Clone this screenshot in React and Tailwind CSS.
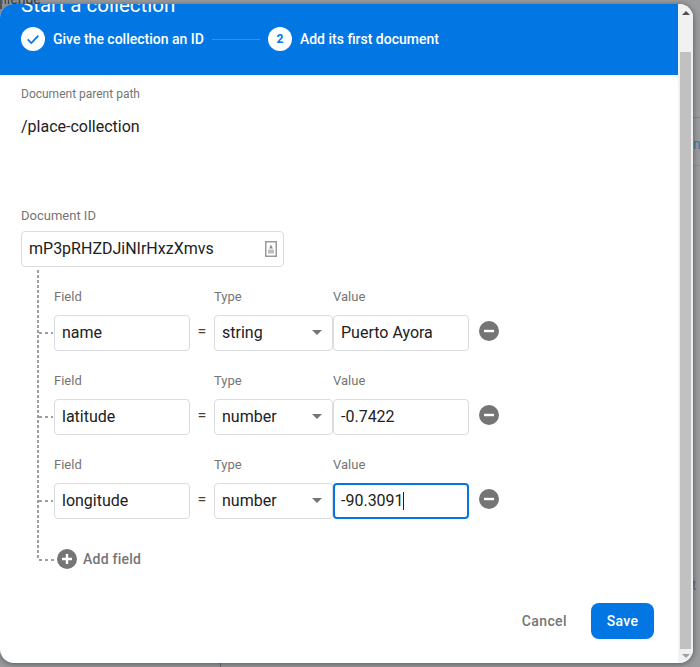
import React from "react";

const rows = [
  { name: "name", type: "string", value: "Puerto Ayora" },
  { name: "latitude", type: "number", value: "-0.7422" },
  { name: "longitude", type: "number", value: "-90.3091", focused: true },
];

const vDots = "bg-[repeating-linear-gradient(to_bottom,#9e9e9e_0,#9e9e9e_3px,transparent_3px,transparent_5px)]";
const hDots = "bg-[repeating-linear-gradient(to_right,#9e9e9e_0,#9e9e9e_3px,transparent_3px,transparent_6px)]";

function Label({ children, className = "" }) {
  return <div className={`leading-4 text-[#757575] ${className}`}>{children}</div>;
}

function Row({ row }) {
  return (
    <div className="grid grid-cols-[15px_136px_24px_119px_136px_10px_20px] grid-rows-[16px_36px] gap-y-[10px]">
      <Label className="col-start-2 text-[13px]">Field</Label>
      <Label className="col-start-4 text-[13px]">Type</Label>
      <Label className="col-start-5 text-[13px]">Value</Label>
      <div className={`col-start-1 row-start-2 self-center h-[2px] w-[14px] ${hDots}`} />
      <div className="col-start-2 row-start-2 flex items-center rounded border border-[#dadce0] px-[7px] text-[#212121]">
        {row.name}
      </div>
      <div className="col-start-3 row-start-2 flex items-center justify-center pb-[2px] text-base text-[#424242]">=</div>
      <div className="col-start-4 row-start-2 flex items-center justify-between rounded border border-[#dadce0] pl-[7px] pr-[10px] text-[#212121]">
        {row.type}
        <span className="mb-[2px] h-0 w-0 border-x-[5px] border-t-[5px] border-x-transparent border-t-[#757575]" />
      </div>
      {row.focused ? (
        <div className="col-start-5 row-start-2 flex items-center rounded border-2 border-[#0277e3] px-[6px] text-[#212121]">
          {row.value}
          <span className="-ml-px h-[18px] w-px bg-[#212121]" />
        </div>
      ) : (
        <div className="col-start-5 row-start-2 flex items-center rounded border border-[#dadce0] px-[7px] text-[#212121]">
          {row.value}
        </div>
      )}
      <div className="col-start-7 row-start-2 flex items-center pb-[4px]">
        <svg width="20" height="20" viewBox="0 0 20 20">
          <circle cx="10" cy="10" r="10" fill="#757575" />
          <rect x="5" y="8.8" width="10" height="2.4" fill="#fff" />
        </svg>
      </div>
    </div>
  );
}

export default function App() {
  return (
    <div className="relative h-[667px] w-[700px] overflow-hidden bg-[#9a9c9e] pb-[4px] pr-[7px] pt-[4px] font-['Roboto',sans-serif]">
      <span className="absolute -left-[21px] -top-[11px] text-sm text-[#3c4043]">Challenge</span>
      <span className="absolute left-0 top-0 h-[9px] w-[2px] bg-[#555]" />
      <span className="absolute right-0 top-[117px] h-px w-[7px] bg-[#85888a]" />
      <span className="absolute right-0 top-[165px] h-px w-[7px] bg-[#8e9092]" />
      <span className="absolute left-[693px] top-[134px] text-sm text-[#3f7a96]">n</span>
      <span className="absolute left-[692px] top-[575px] text-sm text-[#6f7275]">t</span>
      <span className="absolute bottom-0 left-[220px] h-[4px] w-px bg-[#6f7275]" />
      <div className="relative flex h-[659px] overflow-hidden rounded-[14px] bg-white shadow-[0_1px_6px_rgba(0,0,0,0.45)]">
        <div className="flex min-w-0 flex-1 flex-col">
          <header className="h-[71px] shrink-0 overflow-hidden bg-[#0277e3] pl-[21px] text-white">
            <div className="-mt-[11px] text-[20.5px] leading-6">Start a collection</div>
            <div className="mt-[10px] flex items-center text-sm font-medium">
              <span className="flex h-6 w-6 items-center justify-center rounded-full bg-white">
                <svg width="16" height="16" viewBox="0 0 24 24" fill="none" stroke="#0277e3" strokeWidth="2.6">
                  <path d="M4 12.5l5.5 5.5L20 7" />
                </svg>
              </span>
              <span className="ml-2">Give the collection an ID</span>
              <span className="ml-2 h-px w-12 bg-[#2b94ee]" />
              <span className="ml-2 flex h-6 w-6 items-center justify-center rounded-full bg-white text-xs font-bold text-[#0277e3]">2</span>
              <span className="ml-2">Add its first document</span>
            </div>
          </header>
          <main className="flex flex-1 flex-col pl-[21px] pr-6">
            <Label className="mt-[11px] text-xs">Document parent path</Label>
            <div className="mt-[15px] text-base leading-5 text-[#212121]">/place-collection</div>
            <Label className="mt-[71px] text-[13px]">Document ID</Label>
            <div className="mt-[7px] flex h-9 w-[263px] items-center justify-between rounded border border-[#dadce0] pl-[7px] pr-[6px] text-[#212121]">
              mP3pRHZDJiNIrHxzXmvs
              <svg width="12" height="16" viewBox="0 0 12 16" fill="none">
                <rect x="0.75" y="0.75" width="10.5" height="14.5" stroke="#9a9a9a" strokeWidth="1.5" />
                <rect x="3" y="8.5" width="6" height="4" fill="#bdbdbd" />
                <path d="M6 3.5l1.8 4H4.2z" fill="#8a8a8a" />
              </svg>
            </div>
            <div className={`ml-[16px] mt-[3px] flex w-[470px] flex-col gap-[22px] bg-[length:2px_calc(100%-9px)] bg-no-repeat ${vDots} pl-[2px] pt-[19px]`}>
              {rows.map((r) => (
                <Row key={r.name} row={r} />
              ))}
              <div className="mt-[8px] flex items-center">
                <div className={`mt-[2px] h-[2px] w-[17px] ${hDots}`} />
                <svg className="ml-[1px]" width="20" height="20" viewBox="0 0 20 20">
                  <circle cx="10" cy="10" r="10" fill="#757575" />
                  <path d="M10 5v10M5 10h10" stroke="#fff" strokeWidth="2.4" />
                </svg>
                <span className="ml-[6px] text-sm font-medium tracking-[0.25px] text-[#757575]">Add field</span>
              </div>
            </div>
            <div className="mt-[34px] flex items-center justify-end">
              <button className="text-sm font-medium tracking-[0.4px] text-[#757575]">Cancel</button>
              <button className="ml-6 h-9 w-[63px] rounded-lg bg-[#0277e3] text-sm font-medium tracking-[0.25px] text-white">Save</button>
            </div>
          </main>
        </div>
        <div className="flex w-[15px] shrink-0 flex-col items-center bg-[#f1f1f1] pt-[7px] pb-[5px]">
          <span className="h-0 w-0 border-x-[4px] border-b-[4px] border-x-transparent border-b-[#505050]" />
          <div className="mt-[37px] w-[11px] flex-1 bg-[#c1c1c1]" />
          <span className="mt-[5px] h-0 w-0 border-x-[4px] border-t-[4px] border-x-transparent border-t-[#a0a0a0]" />
        </div>
      </div>
    </div>
  );
}
